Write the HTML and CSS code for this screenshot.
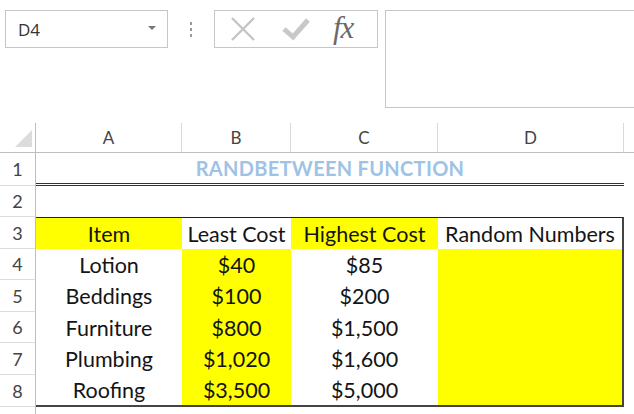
FILE: index.html
```html
<!DOCTYPE html>
<html>
<head>
<meta charset="utf-8">
<link rel="stylesheet" href="styles.css">
</head>
<body>
<div class="formula-area">
  <div class="name-box">
    <span class="name-text">D4</span>
    <span class="dropdown"></span>
  </div>
  <div class="grip"><span></span><span></span><span></span></div>
  <div class="fx-box">
    <svg class="ico-x" width="28" height="28" viewBox="0 0 28 28"><path d="M3 3 L25 25 M25 3 L3 25" stroke="#c4c4c4" stroke-width="2.4" fill="none"/></svg>
    <svg class="ico-check" width="30" height="26" viewBox="0 0 30 26"><path d="M3 13 L12 21 L27 4" stroke="#c8c8c8" stroke-width="5" fill="none" stroke-linejoin="miter"/></svg>
    <span class="fx">fx</span>
  </div>
  <div class="formula-input"></div>
</div>
<div class="sheet">
  <div class="corner"><span class="tri"></span></div>
  <div class="colh">A</div>
  <div class="colh">B</div>
  <div class="colh">C</div>
  <div class="colh">D</div>
  <div class="colh last"></div>

  <div class="rowh">1</div>
  <div class="title">RANDBETWEEN FUNCTION</div>
  <div class="extra"></div>

  <div class="rowh">2</div>
  <div class="blank"></div>
  <div class="extra"></div>

  <div class="rowh">3</div>
  <div class="cell top y">Item</div>
  <div class="cell top">Least Cost</div>
  <div class="cell top y">Highest Cost</div>
  <div class="cell top right">Random Numbers</div>
  <div class="extra"></div>

  <div class="rowh">4</div>
  <div class="cell">Lotion</div>
  <div class="cell y">$40</div>
  <div class="cell">$85</div>
  <div class="cell y right"></div>
  <div class="extra"></div>

  <div class="rowh">5</div>
  <div class="cell">Beddings</div>
  <div class="cell y">$100</div>
  <div class="cell">$200</div>
  <div class="cell y right"></div>
  <div class="extra"></div>

  <div class="rowh">6</div>
  <div class="cell">Furniture</div>
  <div class="cell y">$800</div>
  <div class="cell">$1,500</div>
  <div class="cell y right"></div>
  <div class="extra"></div>

  <div class="rowh">7</div>
  <div class="cell">Plumbing</div>
  <div class="cell y">$1,020</div>
  <div class="cell">$1,600</div>
  <div class="cell y right"></div>
  <div class="extra"></div>

  <div class="rowh">8</div>
  <div class="cell bottom">Roofing</div>
  <div class="cell y bottom">$3,500</div>
  <div class="cell bottom">$5,000</div>
  <div class="cell y right bottom"></div>
  <div class="extra"></div>

  <div class="rowh"></div>
  <div class="blank"></div>
  <div class="extra"></div>
</div>
</body>
</html>
```
FILE: styles.css
```css
html, body {
  margin: 0;
  padding: 0;
  background: #ffffff;
  overflow: hidden;
}
body {
  width: 634px;
  height: 414px;
  font-family: Lato, "Liberation Sans", sans-serif;
}
.formula-area {
  display: flex;
  align-items: flex-start;
  height: 123px;
  box-sizing: border-box;
  padding: 10px 0 0 5px;
}
.name-box {
  width: 163px;
  height: 38px;
  box-sizing: border-box;
  border: 1px solid #c6c6c6;
  display: flex;
  align-items: center;
  justify-content: space-between;
  padding: 0 11px 0 12px;
}
.name-text {
  font-family: "Open Sans", "Liberation Sans", sans-serif;
  font-size: 17px;
  color: #333;
}
.dropdown {
  width: 0;
  height: 0;
  border-left: 4px solid transparent;
  border-right: 4px solid transparent;
  border-top: 4px solid #777;
  margin-top: -3px;
}
.grip {
  width: 46px;
  height: 38px;
  display: flex;
  flex-direction: column;
  align-items: center;
  justify-content: center;
  gap: 3px;
}
.grip span {
  width: 2px;
  height: 3px;
  background: #9a9a9a;
}
.fx-box {
  width: 164px;
  height: 38px;
  box-sizing: border-box;
  border: 1px solid #c6c6c6;
  display: flex;
  align-items: center;
  padding-left: 14px;
}
.ico-x { margin-right: 24px; }
.ico-check { margin-right: 22px; }
.fx {
  font-family: "Liberation Serif", "DejaVu Serif", serif;
  font-style: italic;
  font-size: 31px;
  color: #6a6a6a;
  margin-top: -2px;
  letter-spacing: -1px;
}
.formula-input {
  flex: 1;
  margin-left: 7px;
  height: 98px;
  box-sizing: border-box;
  border: 1px solid #c6c6c6;
  border-right: none;
}
.sheet {
  display: grid;
  grid-template-columns: 36px 146px 109px 147px 186px 10px;
  grid-template-rows: 30px 33px 31px 32px 31px 32px 31px 32px 32px 12px;
}
.corner {
  border-right: 1px solid #bdbdbd;
  border-bottom: 1px solid #bdbdbd;
  position: relative;
}
.tri {
  position: absolute;
  left: 15px;
  top: 7px;
  width: 0;
  height: 0;
  border-left: 17px solid transparent;
  border-bottom: 17px solid #dcdcdc;
}
.colh {
  border-right: 1px solid #dadada;
  border-bottom: 1px solid #bdbdbd;
  display: flex;
  align-items: center;
  justify-content: center;
  font-size: 17px;
  color: #444;
}
.colh.last { border-right: none; }
.rowh {
  grid-column: 1;
  border-right: 1px solid #bdbdbd;
  border-bottom: 1px solid #dcdcdc;
  display: flex;
  align-items: center;
  justify-content: center;
  font-size: 18px;
  color: #444;
}
.title {
  grid-column: 2 / span 4;
  border-bottom: 3px double #333;
  display: flex;
  align-items: center;
  justify-content: center;
  font-weight: bold;
  font-size: 20px;
  color: #9dc3e6;
  letter-spacing: 0.3px;
}
.blank {
  grid-column: 2 / span 4;
}
.extra { }
.cell {
  display: flex;
  align-items: center;
  justify-content: center;
  font-size: 21.5px;
  color: #141414;
  background: #ffffff;
}
.cell.y { background: #ffff00; }
.cell.top { border-top: 1px solid #222; }
.cell.right { border-right: 2px solid #444; }
.cell.bottom { border-bottom: 2px solid #444; }
```
